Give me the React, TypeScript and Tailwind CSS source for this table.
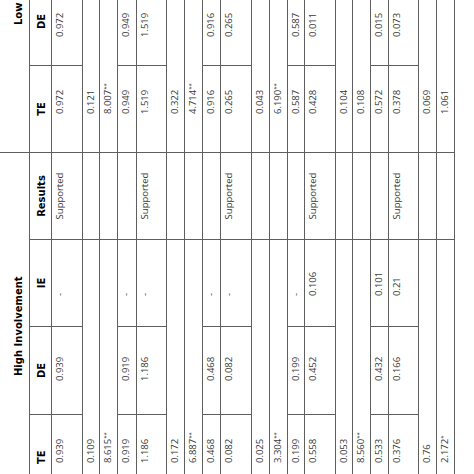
import React from "react";

type Row = { kind: "full" | "stat"; h: string; v: string[]; last?: boolean };

const rows: Row[] = [
  { kind: "full", h: "h-[31px]", v: ["0.939", "0.939", "-", "Supported", "0.972", "0.972"] },
  { kind: "stat", h: "h-[17px]", v: ["0.109", "0.121"] },
  { kind: "stat", h: "h-[18px]", v: ["8.615**", "8.007**"] },
  { kind: "full", h: "h-[19px]", v: ["0.919", "0.919", "-", "", "0.949", "0.949"] },
  { kind: "full", h: "h-[30px]", v: ["1.186", "1.186", "-", "Supported", "1.519", "1.519"] },
  { kind: "stat", h: "h-[18px]", v: ["0.172", "0.322"] },
  { kind: "stat", h: "h-[18px]", v: ["6.887**", "4.714**"] },
  { kind: "full", h: "h-[18px]", v: ["0.468", "0.468", "-", "", "0.916", "0.916"] },
  { kind: "full", h: "h-[31px]", v: ["0.082", "0.082", "-", "Supported", "0.265", "0.265"] },
  { kind: "stat", h: "h-[18px]", v: ["0.025", "0.043"] },
  { kind: "stat", h: "h-[18px]", v: ["3.304**", "6.190**"] },
  { kind: "full", h: "h-[17px]", v: ["0.199", "0.199", "-", "", "0.587", "0.587"] },
  { kind: "full", h: "h-[31px]", v: ["0.558", "0.452", "0.106", "Supported", "0.428", "0.011"] },
  { kind: "stat", h: "h-[17px]", v: ["0.053", "0.104"] },
  { kind: "stat", h: "h-[18px]", v: ["8.560**", "0.108"] },
  { kind: "full", h: "h-[18px]", v: ["0.533", "0.432", "0.101", "", "0.572", "0.015"] },
  { kind: "full", h: "h-[30px]", v: ["0.376", "0.166", "0.21", "Supported", "0.378", "0.073"] },
  { kind: "stat", h: "h-[18px]", v: ["0.76", "0.069"] },
  { kind: "stat", h: "h-[19px]", v: ["2.172*", "1.061"], last: true },
];

function Val({ t }: { t: string }) {
  const m = t.match(/^([^*]*)(\**)$/);
  const base = m ? m[1] : t;
  const stars = m ? m[2] : "";
  return (
    <span className="whitespace-nowrap">
      {base}
      {stars && <span className="relative -top-[3px] text-[6px]">{stars}</span>}
    </span>
  );
}

const line = "border-[#5f5f5f]";

function FullRow({ r }: { r: Row }) {
  return (
    <div className={`flex shrink-0 border-t ${line} ${r.h} ${r.last ? "border-b" : ""}`}>
      <div className="w-[59px] shrink-0 pl-[11px]"><Val t={r.v[0]} /></div>
      <div className={`w-[88px] shrink-0 border-l ${line} pl-[33px]`}><Val t={r.v[1]} /></div>
      <div className={`w-[87px] shrink-0 border-l ${line} pl-[30px]`}><Val t={r.v[2]} /></div>
      <div className={`w-[87px] shrink-0 border-l ${line} text-center`}><Val t={r.v[3]} /></div>
      <div className={`w-[87px] shrink-0 border-l ${line} pl-[38px]`}><Val t={r.v[4]} /></div>
      <div className={`w-[66px] shrink-0 border-l ${line} pl-[28px]`}><Val t={r.v[5]} /></div>
    </div>
  );
}

function StatRow({ r }: { r: Row }) {
  return (
    <div className={`flex shrink-0 border-t ${line} ${r.h} ${r.last ? "border-b" : ""}`}>
      <div className="w-[59px] shrink-0 pl-[11px]"><Val t={r.v[0]} /></div>
      <div className="w-[88px] shrink-0"></div>
      <div className="w-[87px] shrink-0"></div>
      <div className={`w-[87px] shrink-0 border-l ${line}`}></div>
      <div className={`w-[87px] shrink-0 border-l ${line} pl-[38px]`}><Val t={r.v[1]} /></div>
      <div className="w-[66px] shrink-0"></div>
    </div>
  );
}

export default function App() {
  return (
    <div className="w-[474px] h-[474px] overflow-hidden bg-white">
      <div className="w-[474px] h-[474px] -rotate-90 overflow-hidden bg-white">
        <div className="flex w-[474px] flex-col font-['Open_Sans',sans-serif] text-[9.5px] leading-[16px] text-[#3a3a3a]">
          <div className="flex h-[29px] shrink-0 font-['DejaVu_Sans',sans-serif] text-[10px] font-bold leading-[12px] text-black">
            <div className="w-[321px] shrink-0 pl-[98px] pt-[13px]">High Involvement</div>
            <div className={`w-[153px] shrink-0 border-l ${line} pl-[127px] pt-[13px]`}>Low</div>
          </div>
          <div className={`flex h-[22px] shrink-0 border-t ${line} font-['DejaVu_Sans',sans-serif] text-[10px] font-bold leading-[21px] text-black`}>
            <div className="w-[59px] shrink-0 pl-[10px] pt-[1px]">TE</div>
            <div className={`w-[88px] shrink-0 border-l ${line} pt-[1px] text-center`}>DE</div>
            <div className={`w-[87px] shrink-0 border-l ${line} pt-[1px] text-center`}>IE</div>
            <div className={`w-[87px] shrink-0 border-l ${line} pt-[1px] text-center`}>Results</div>
            <div className={`w-[87px] shrink-0 border-l ${line} pt-[1px] text-center`}>TE</div>
            <div className={`w-[66px] shrink-0 border-l ${line} pl-[36px] pt-[1px]`}>DE</div>
          </div>
          {rows.map((r, i) =>
            r.kind === "full" ? <FullRow key={i} r={r} /> : <StatRow key={i} r={r} />
          )}
        </div>
      </div>
    </div>
  );
}
